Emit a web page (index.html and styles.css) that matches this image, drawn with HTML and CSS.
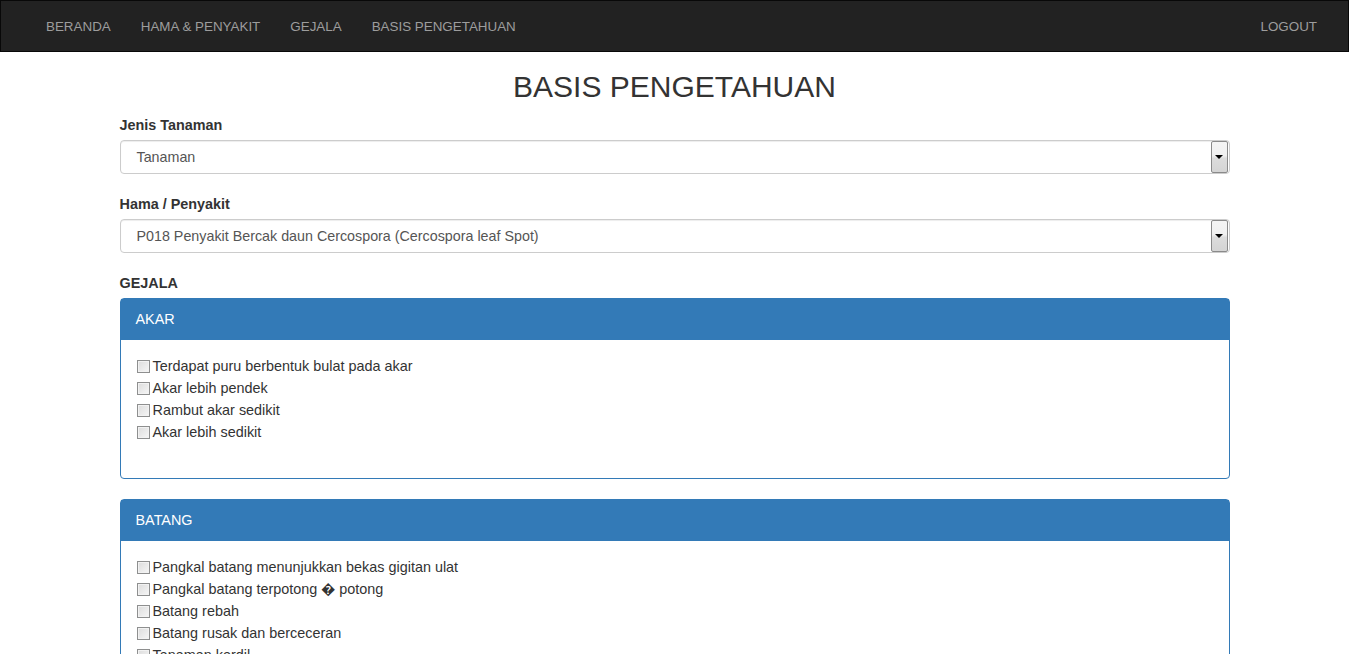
FILE: index.html
```html
<!DOCTYPE html>
<html lang="id">
<head>
    <meta charset="UTF-8">
    <title>Basis Pengetahuan</title>
    <link rel="stylesheet" href="styles.css">
</head>
<body>
    <nav class="navbar">
        <ul class="nav">
            <li><a href="#">Beranda</a></li>
            <li><a href="#">Hama &amp; Penyakit</a></li>
            <li><a href="#">Gejala</a></li>
            <li><a href="#">Basis Pengetahuan</a></li>
        </ul>
        <ul class="nav nav-right">
            <li><a href="#">Logout</a></li>
        </ul>
    </nav>

    <div class="container">
        <h2 class="page-title">BASIS PENGETAHUAN</h2>

        <div class="form-group">
            <label class="field-label">Jenis Tanaman</label>
            <div class="select-box">
                <span class="select-text">Tanaman</span>
                <span class="select-btn"><span class="arrow"></span></span>
            </div>
        </div>

        <div class="form-group">
            <label class="field-label">Hama / Penyakit</label>
            <div class="select-box">
                <span class="select-text">P018 Penyakit Bercak daun Cercospora (Cercospora leaf Spot)</span>
                <span class="select-btn"><span class="arrow"></span></span>
            </div>
        </div>

        <label class="field-label gejala-label">GEJALA</label>

        <div class="panel">
            <div class="panel-heading">AKAR</div>
            <div class="panel-body">
                <div class="check-row"><span class="check"></span>Terdapat puru berbentuk bulat pada akar</div>
                <div class="check-row"><span class="check"></span>Akar lebih pendek</div>
                <div class="check-row"><span class="check"></span>Rambut akar sedikit</div>
                <div class="check-row"><span class="check"></span>Akar lebih sedikit</div>
            </div>
        </div>

        <div class="panel">
            <div class="panel-heading">BATANG</div>
            <div class="panel-body">
                <div class="check-row"><span class="check"></span>Pangkal batang menunjukkan bekas gigitan ulat</div>
                <div class="check-row"><span class="check"></span>Pangkal batang terpotong � potong</div>
                <div class="check-row"><span class="check"></span>Batang rebah</div>
                <div class="check-row"><span class="check"></span>Batang rusak dan berceceran</div>
                <div class="check-row"><span class="check"></span>Tanaman kerdil</div>
            </div>
        </div>
    </div>
</body>
</html>
```

FILE: styles.css
```css
body {
    margin: 0;
    font-family: "Liberation Sans", Arial, sans-serif;
    font-size: 14.4px;
    line-height: 20px;
    color: #333;
    background: #fff;
}

/* Navbar atas */
.navbar {
    display: flex;
    justify-content: space-between;
    height: 50px;
    background-color: #222;
    border: 1px solid #080808;
    padding: 0 15px;
}

.nav {
    display: flex;
    list-style: none;
    margin: 0;
    padding: 0 0 0 15px;
}

.nav-right {
    padding: 0 1px 0 0;
}

.nav a {
    display: block;
    padding: 16px 15px 14px;
    font-size: 13.4px;
    color: #9d9d9d;
    text-decoration: none;
    text-transform: uppercase;
}

.container {
    width: 1110px;
    margin: 0 auto;
}

.page-title {
    margin: 18px 0 12px;
    font-size: 30px;
    font-weight: normal;
    line-height: 33px;
    text-align: center;
}

.form-group {
    margin-bottom: 20px;
}

.field-label {
    display: block;
    margin-bottom: 5px;
    font-size: 14.4px;
    font-weight: bold;
}

.gejala-label {
    margin-top: 1px;
    margin-bottom: 5px;
}

/* Select model lama */
.select-box {
    display: flex;
    align-items: center;
    justify-content: space-between;
    height: 32px;
    border: 1px solid #ccc;
    border-radius: 4px;
    box-shadow: inset 0 1px 1px rgba(0, 0, 0, 0.075);
    font-size: 14.3px;
    color: #555;
}

.select-text {
    padding-left: 16px;
}

.select-btn {
    display: flex;
    align-items: center;
    justify-content: center;
    width: 15px;
    height: 30px;
    margin-right: 1px;
    border: 1px solid #8a8a8a;
    border-radius: 2px;
    background: linear-gradient(#f4f4f4, #f0f0f0 45%, #dcdcdc 55%, #d4d4d4);
}

.arrow {
    width: 0;
    height: 0;
    border-left: 4px solid transparent;
    border-right: 4px solid transparent;
    border-top: 4px solid #000;
}

/* Panel gejala */
.panel {
    margin-bottom: 20px;
    border: 1px solid #337ab7;
    border-radius: 4px;
}

.panel-heading {
    padding: 10px 15px;
    background-color: #337ab7;
    border-bottom: 1px solid #337ab7;
    color: #fff;
}

.panel-body {
    padding: 15px 15px 35px;
}

.check-row {
    display: flex;
    align-items: center;
    height: 22px;
}

.check {
    box-sizing: border-box;
    width: 13px;
    height: 13px;
    margin: 0 3px 0 1px;
    border: 1px solid #8e8f8f;
    background: linear-gradient(135deg, #dcdcdc, #f6f6f6);
    box-shadow: inset 0 0 0 1px #f2f2f2;
}
```
